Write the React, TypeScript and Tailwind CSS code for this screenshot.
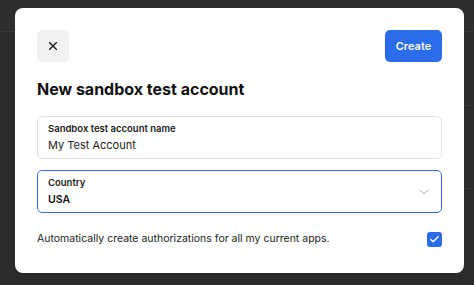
import { X, ChevronDown, Check } from "lucide-react";

export default function App() {
  return (
    <div className="relative h-[285px] w-[474px] overflow-hidden bg-[#2b2b2b] font-['Inter',sans-serif]">
      {/* page behind the dialog */}
      <div className="h-[32px] border-b border-[#3a3a3a] bg-[#2e2e2e]" />
      <div className="ml-auto mt-[73px] w-[40px] border-t border-[#3a3a3a] pl-[4px] pt-[8px] text-[13px] leading-[17px] text-[#777]">
        <div>c</div>
        <div>e</div>
      </div>
      <div className="ml-auto mt-[40px] w-[40px] border-t border-[#3a3a3a] pl-[2px] pt-[12px] text-[13px] leading-[22px] text-[#6b7fa8]">
        <div>ar</div>
        <div>ar</div>
      </div>

      <div className="absolute left-[15px] top-[8px] flex h-[265px] w-[449px] flex-col rounded-[8px] bg-white px-[22px] pt-[22px]">
        <div className="flex items-center justify-between">
          <button className="flex h-[32px] w-[32px] items-center justify-center rounded-[5px] bg-[#f1f1f1] text-[#111]">
            <X size={14} strokeWidth={2} />
          </button>
          <button className="h-[32px] w-[57px] rounded-[5px] bg-[#2b6cea] text-[11px] font-semibold text-white">
            Create
          </button>
        </div>

        <h2 className="mt-[15px] text-[16px] font-bold leading-[24px] text-[#111]">
          New sandbox test account
        </h2>

        <div className="mt-[15px] flex h-[43px] flex-col justify-center rounded-[5px] border border-[#e2e2e2] px-[10px]">
          <div className="text-[9.5px] font-semibold leading-[13px] text-[#222]">
            Sandbox test account name
          </div>
          <div className="mt-[3px] text-[11px] leading-[15px] text-[#222]">My Test Account</div>
        </div>

        <div className="mt-[11px] flex h-[43px] items-center justify-between rounded-[5px] border-[1.5px] border-[#3d6fe3] pl-[10px] pr-[9px]">
          <div className="flex flex-col">
            <div className="text-[9.5px] font-semibold leading-[13px] text-[#222]">Country</div>
            <div className="mt-[3px] text-[10.5px] font-semibold leading-[15px] text-[#111]">USA</div>
          </div>
          <ChevronDown size={16} strokeWidth={1.5} className="text-[#aaa]" />
        </div>

        <div className="mt-[18px] flex items-center justify-between">
          <span className="text-[10.5px] leading-[16px] text-[#222]">
            Automatically create authorizations for all my current apps.
          </span>
          <span className="flex h-[15px] w-[15px] items-center justify-center rounded-[3px] bg-[#2b6cea] text-white">
            <Check size={11} strokeWidth={3} />
          </span>
        </div>
      </div>
    </div>
  );
}
